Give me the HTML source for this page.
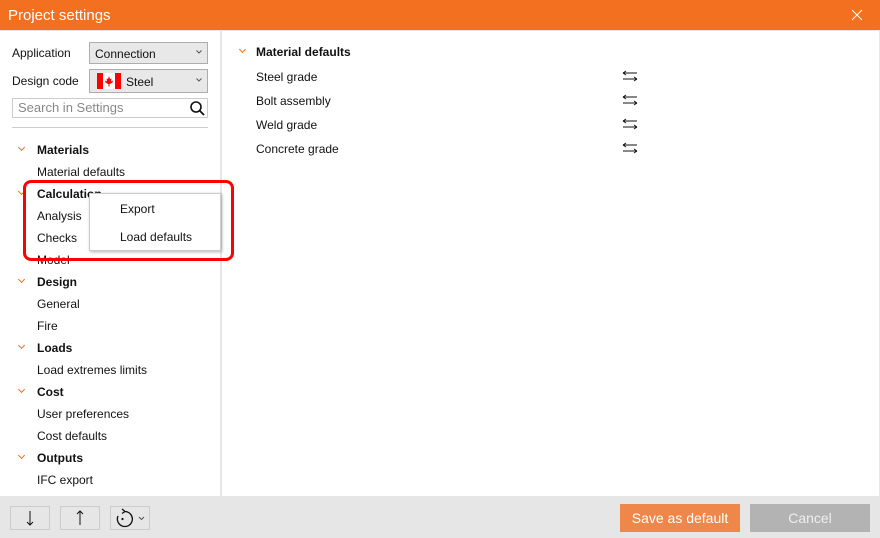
<!DOCTYPE html>
<html><head><style>
*{margin:0;padding:0;box-sizing:border-box}
body{width:880px;height:538px;background:#e6e6e6;font-family:"Liberation Sans",sans-serif;font-size:12px;color:#111;position:relative;overflow:hidden}
.a{position:absolute;white-space:nowrap}
.t{position:absolute;white-space:nowrap;line-height:14px}
.b{font-weight:bold}
.chev{position:absolute;width:5px;height:5px;border-right:1px solid #f37021;border-bottom:1px solid #f37021;transform:rotate(45deg)}
.sw{position:absolute;width:16px;height:12px}
</style></head><body>
<div class="a" style="left:0;top:0;width:880px;height:30px;background:#f37021"></div>
<div class="t" style="left:8px;top:8px;color:#fff;font-size:15px;line-height:16px">Project settings</div>
<svg class="a" style="left:851px;top:9px" width="12" height="12"><path d="M1 1L11 11M11 1L1 11" stroke="#fff" stroke-width="1"/></svg>
<div class="a" style="left:0;top:31px;width:220px;height:465px;background:#fff"></div>
<div class="a" style="left:222px;top:31px;width:657px;height:465px;background:#fff"></div>

<div class="t" style="left:12px;top:46px">Application</div>
<div class="a" style="left:89px;top:42px;width:119px;height:22px;background:#e8e8e8;border:1px solid #adadad"></div>
<div class="t" style="left:95px;top:47px">Connection</div>
<svg class="a" style="left:196px;top:50px" width="6" height="4"><path d="M0.5 0.5L3 3L5.5 0.5" stroke="#555" fill="none"/></svg>
<div class="t" style="left:12px;top:74px">Design code</div>
<div class="a" style="left:89px;top:69px;width:119px;height:24px;background:#e8e8e8;border:1px solid #adadad"></div>
<svg class="a" style="left:97px;top:73px" width="24" height="16"><rect width="24" height="16" fill="#f00"/><rect x="6" width="12" height="16" fill="#fff"/><path d="M12 3L13 6L14.5 5.5L14 8.5L16 7.5L15.5 9.5L13 11H12.5V13.5H11.5V11H11L8.5 9.5L8 7.5L10 8.5L9.5 5.5L11 6Z" fill="#f00"/></svg>
<div class="t" style="left:126px;top:75px">Steel</div>
<svg class="a" style="left:196px;top:78px" width="6" height="4"><path d="M0.5 0.5L3 3L5.5 0.5" stroke="#555" fill="none"/></svg>
<div class="a" style="left:12px;top:98px;width:196px;height:20px;border:1px solid #ccc"></div>
<div class="t" style="left:18px;top:101px;color:#888;font-size:13px">Search in Settings</div>
<svg class="a" style="left:189px;top:100px" width="16" height="16"><circle cx="7" cy="7" r="5" fill="none" stroke="#111" stroke-width="1.6"/><line x1="10.5" y1="10.5" x2="15" y2="15" stroke="#111" stroke-width="1.8"/></svg>
<div class="a" style="left:12px;top:127px;width:196px;height:1px;background:#ccc"></div>

<div class="chev" style="left:19px;top:145px"></div><div class="t b" style="left:37px;top:143px">Materials</div>
<div class="t" style="left:37px;top:165px">Material defaults</div>
<div class="chev" style="left:19px;top:189px"></div><div class="t b" style="left:37px;top:187px">Calculation</div>
<div class="t" style="left:37px;top:209px">Analysis</div>
<div class="t" style="left:37px;top:231px">Checks</div>
<div class="t" style="left:37px;top:253px">Model</div>
<div class="chev" style="left:19px;top:277px"></div><div class="t b" style="left:37px;top:275px">Design</div>
<div class="t" style="left:37px;top:297px">General</div>
<div class="t" style="left:37px;top:319px">Fire</div>
<div class="chev" style="left:19px;top:343px"></div><div class="t b" style="left:37px;top:341px">Loads</div>
<div class="t" style="left:37px;top:363px">Load extremes limits</div>
<div class="chev" style="left:19px;top:387px"></div><div class="t b" style="left:37px;top:385px">Cost</div>
<div class="t" style="left:37px;top:407px">User preferences</div>
<div class="t" style="left:37px;top:429px">Cost defaults</div>
<div class="chev" style="left:19px;top:453px"></div><div class="t b" style="left:37px;top:451px">Outputs</div>
<div class="t" style="left:37px;top:473px">IFC export</div>

<div class="a" style="left:23px;top:180px;width:211px;height:81px;border:3px solid #f00;border-radius:8px"></div>
<div class="a" style="left:89px;top:193px;width:132px;height:58px;background:#fff;border:1px solid #ccc;box-shadow:1px 1px 3px rgba(0,0,0,.3)"></div>
<div class="t" style="left:120px;top:202px">Export</div>
<div class="t" style="left:120px;top:230px">Load defaults</div>

<div class="chev" style="left:240px;top:47px"></div><div class="t b" style="left:256px;top:45px">Material defaults</div>
<div class="t" style="left:256px;top:70px">Steel grade</div>
<div class="t" style="left:256px;top:94px">Bolt assembly</div>
<div class="t" style="left:256px;top:118px">Weld grade</div>
<div class="t" style="left:256px;top:142px">Concrete grade</div>
<svg class="sw" style="left:622px;top:70px" viewBox="0 0 16 12"><path d="M1 3H15M1 3L4 1M1 3L4 5M1 9H15M15 9L12 7M15 9L12 11" stroke="#111" fill="none"/></svg>
<svg class="sw" style="left:622px;top:94px" viewBox="0 0 16 12"><path d="M1 3H15M1 3L4 1M1 3L4 5M1 9H15M15 9L12 7M15 9L12 11" stroke="#111" fill="none"/></svg>
<svg class="sw" style="left:622px;top:118px" viewBox="0 0 16 12"><path d="M1 3H15M1 3L4 1M1 3L4 5M1 9H15M15 9L12 7M15 9L12 11" stroke="#111" fill="none"/></svg>
<svg class="sw" style="left:622px;top:142px" viewBox="0 0 16 12"><path d="M1 3H15M1 3L4 1M1 3L4 5M1 9H15M15 9L12 7M15 9L12 11" stroke="#111" fill="none"/></svg>

<div class="a" style="left:10px;top:506px;width:40px;height:24px;border:1px solid #ccc"></div>
<svg class="a" style="left:10px;top:506px" width="40" height="24"><path d="M20 5V19M17 16L20 19L23 16" stroke="#111" fill="none"/></svg>
<div class="a" style="left:60px;top:506px;width:40px;height:24px;border:1px solid #ccc"></div>
<svg class="a" style="left:60px;top:506px" width="40" height="24"><path d="M20 5V19M17 8L20 5L23 8" stroke="#111" fill="none"/></svg>
<div class="a" style="left:110px;top:506px;width:40px;height:24px;border:1px solid #ccc"></div>
<svg class="a" style="left:110px;top:506px" width="40" height="24"><path d="M8 10A7.5 7.5 0 1 0 15 5.5M15 5.5L12 3M15 5.5L12 7.5" stroke="#111" fill="none" stroke-width="1.3"/><circle cx="12.5" cy="13" r="1.1" fill="#111"/><path d="M29 11L31.5 13.5L34 11" stroke="#555" fill="none"/></svg>

<div class="a" style="left:620px;top:504px;width:120px;height:28px;background:#f0874a"></div>
<div class="t" style="left:620px;top:511px;width:120px;text-align:center;color:#fff;font-size:14px">Save as default</div>
<div class="a" style="left:750px;top:504px;width:120px;height:28px;background:#b3b3b3"></div>
<div class="t" style="left:750px;top:511px;width:120px;text-align:center;color:#eee;font-size:14px">Cancel</div>
</body></html>
